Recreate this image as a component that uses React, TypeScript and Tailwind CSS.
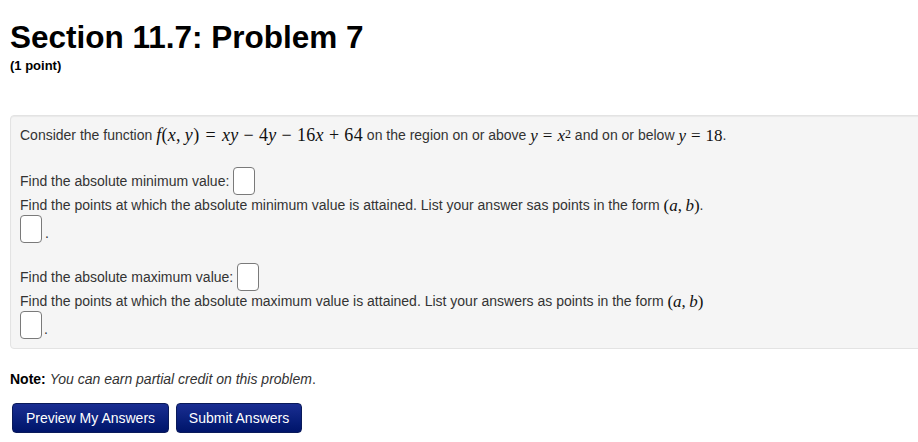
import React from "react";

const I = ({ children }: { children: React.ReactNode }) => (
  <span className="italic">{children}</span>
);
const Op = ({ children }: { children: React.ReactNode }) => (
  <span className="mx-[5px]">{children}</span>
);
const Rel = ({ children }: { children: React.ReactNode }) => (
  <span className="mx-[6px]">{children}</span>
);
const RelS = ({ children }: { children: React.ReactNode }) => (
  <span className="mx-[5px]">{children}</span>
);
const M = ({ children }: { children: React.ReactNode }) => (
  <span className="font-['Liberation_Serif',serif] text-[18px] tracking-[0.3px] text-[#111] leading-none">{children}</span>
);
const Ms = ({ children }: { children: React.ReactNode }) => (
  <span className="font-['Liberation_Serif',serif] text-[17px] text-[#111] leading-none">{children}</span>
);

const Box = () => (
  <span className="inline-block w-[22px] h-[28px] border border-[#7a7a7a] rounded-[4px] bg-white align-middle" />
);

export default function App() {
  return (
    <div className="w-[918px] h-[442px] overflow-hidden bg-white font-['Liberation_Sans',Arial,sans-serif] text-[#333]">
      <div className="pl-[10px] pt-[20px]">
        <h1 className="text-[31.5px] font-bold leading-[34px] text-black">Section 11.7: Problem 7</h1>
        <div className="text-[13px] font-bold leading-[16px] mt-[4px] text-black">(1 point)</div>
      </div>
      <div className="ml-[10px] mr-[-20px] mt-[41px] border border-[#e3e3e3] rounded-[4px] bg-[#f5f5f5] shadow-[inset_0_1px_1px_rgba(0,0,0,0.05)] pl-[9px] pt-[9px] pb-[9px] text-[14px]">
        <div className="h-[20px] flex items-center whitespace-nowrap">
          <span>Consider the function&nbsp;</span>
          <M>
            <I>f</I>(<I>x</I>,&thinsp;<I>y</I>)<Rel>=</Rel><I>xy</I><Op>−</Op>4<I>y</I><Op>−</Op>16<I>x</I><Op>+</Op>64
          </M>
          <span>&nbsp;on the region on or above&nbsp;</span>
          <Ms>
            <I>y</I><RelS>=</RelS><I>x</I><sup className="text-[12px] relative top-[-3px]">2</sup>
          </Ms>
          <span>&nbsp;and on or below&nbsp;</span>
          <Ms>
            <I>y</I><RelS>=</RelS>18
          </Ms>
          <span>.</span>
        </div>
        <div className="mt-[22px] h-[28px] flex items-center">
          <span>Find the absolute minimum value:&nbsp;</span>
          <Box />
        </div>
        <div className="h-[20px] flex items-center">
          <span>Find the points at which the absolute minimum value is attained. List your answer sas points in the form&nbsp;</span>
          <Ms>(<I>a</I>,&thinsp;<I>b</I>)</Ms>
          <span>.</span>
        </div>
        <div className="h-[28px] flex items-center">
          <Box />
          <span className="ml-[3px] mt-[8px]">.</span>
        </div>
        <div className="mt-[20px] h-[28px] flex items-center">
          <span>Find the absolute maximum value:&nbsp;</span>
          <Box />
        </div>
        <div className="h-[20px] flex items-center">
          <span>Find the points at which the absolute maximum value is attained. List your answers as points in the form&nbsp;</span>
          <Ms>(<I>a</I>,&thinsp;<I>b</I>)</Ms>
        </div>
        <div className="h-[28px] flex items-center">
          <Box />
          <span className="ml-[2px] mt-[8px]">.</span>
        </div>
      </div>
      <div className="pl-[10px] mt-[20px] text-[14px] leading-[20px] text-black">
        <span className="font-bold">Note:</span> <span className="italic text-[#333]">You can earn partial credit on this problem</span><span className="text-[#333]">.</span>
      </div>
      <div className="pl-[12px] mt-[14px] flex gap-[7px]">
        <button className="h-[30px] w-[157px] rounded-[4px] bg-gradient-to-b from-[#1a2e92] to-[#00146a] text-white text-[14px] border border-[#0a1a5a]">Preview My Answers</button>
        <button className="h-[30px] w-[126px] rounded-[4px] bg-gradient-to-b from-[#1a2e92] to-[#00146a] text-white text-[14px] border border-[#0a1a5a]">Submit Answers</button>
      </div>
    </div>
  );
}
